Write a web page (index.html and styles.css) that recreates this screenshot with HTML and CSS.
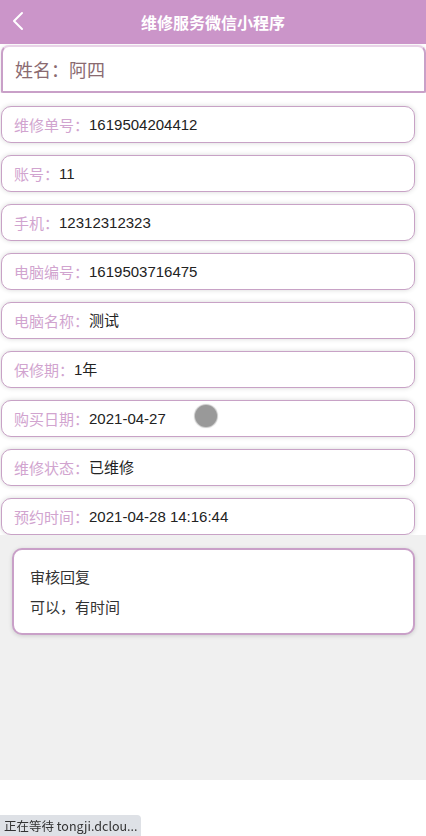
FILE: index.html
```html
<!DOCTYPE html>
<html lang="zh">
<head>
<meta charset="utf-8">
<title>维修服务微信小程序</title>
<link rel="stylesheet" href="styles.css">
</head>
<body>
<div class="page">
  <header class="nav">
    <svg class="back" width="14" height="20" viewBox="0 0 14 20"><polyline points="11,2 3,10 11,18" fill="none" stroke="#fff" stroke-width="2" stroke-linecap="round" stroke-linejoin="round"/></svg>
    <h1 class="title">维修服务微信小程序</h1>
  </header>
  <div class="name-card">姓名：阿四</div>
  <div class="rows">
    <div class="row"><span class="label">维修单号：</span><span class="value">1619504204412</span></div>
    <div class="row"><span class="label">账号：</span><span class="value">11</span></div>
    <div class="row"><span class="label">手机：</span><span class="value">12312312323</span></div>
    <div class="row"><span class="label">电脑编号：</span><span class="value">1619503716475</span></div>
    <div class="row"><span class="label">电脑名称：</span><span class="value">测试</span></div>
    <div class="row"><span class="label">保修期：</span><span class="value">1年</span></div>
    <div class="row"><span class="label">购买日期：</span><span class="value">2021-04-27</span></div>
    <div class="row"><span class="label">维修状态：</span><span class="value">已维修</span></div>
    <div class="row"><span class="label">预约时间：</span><span class="value">2021-04-28 14:16:44</span></div>
  </div>
  <div class="reply-area">
    <div class="reply-card">
      <p class="reply-line">审核回复</p>
      <p class="reply-line">可以，有时间</p>
    </div>
  </div>
</div>
<div class="touch-dot"></div>
<div class="status">正在等待 tongji.dclou...</div>
</body>
</html>
```
FILE: styles.css
```css
html, body {
  margin: 0;
  padding: 0;
  background: #fff;
}
body {
  font-family: "Liberation Sans", "Noto Sans CJK SC", sans-serif;
  width: 426px;
  overflow: hidden;
}
.page {
  display: flex;
  flex-direction: column;
}
.nav {
  height: 44px;
  background: #cb95c9;
  display: flex;
  align-items: center;
  justify-content: center;
  position: relative;
}
.back {
  position: absolute;
  left: 11px;
  top: 11px;
}
.title {
  margin: 0;
  color: #fff;
  font-size: 16px;
  font-weight: bold;
  font-family: "Noto Sans CJK SC", sans-serif;
  line-height: 44px;
}
.name-card {
  margin: 1px 0 0 1px;
  height: 44px;
  border: 2px solid #c9a0c8;
  border-top-color: #e9d3e8;
  border-radius: 8px 8px 2px 2px;
  background: #fff;
  box-shadow: 0 1px 4px rgba(0,0,0,0.12);
  padding-left: 12px;
  font-size: 18px;
  line-height: 44px;
  color: #8a6a70;
  font-family: "Noto Sans CJK SC", sans-serif;
}
.rows {
  background: #fff;
  padding-top: 13px;
  display: flex;
  flex-direction: column;
  gap: 12px;
}
.row {
  margin-left: 1px;
  width: 400px;
  height: 35px;
  border: 1px solid #c8a2c6;
  border-radius: 10px;
  background: #fff;
  box-shadow: 0 0 5px rgba(0,0,0,0.16);
  padding-left: 12px;
  display: flex;
  align-items: center;
  font-size: 15px;
  line-height: 35px;
}
.label {
  color: #d1a4cf;
  font-family: "Noto Sans CJK SC", sans-serif;
}
.value {
  color: #222;
}
.reply-area {
  background: #f0f0f0;
  height: 245px;
  padding-top: 13px;
  box-sizing: border-box;
}
.reply-card {
  margin-left: 12px;
  width: 403px;
  box-sizing: border-box;
  border: 2px solid #c9a0c8;
  border-radius: 10px;
  background: #fff;
  box-shadow: 0 1px 4px rgba(0,0,0,0.15);
  padding: 12px 16px 11px;
}
.reply-line {
  margin: 0;
  font-size: 15px;
  line-height: 30px;
  color: #333;
  font-family: "Noto Sans CJK SC", sans-serif;
}
.touch-dot {
  position: absolute;
  left: 195px;
  top: 405px;
  width: 22px;
  height: 22px;
  border-radius: 50%;
  background: #999;
  box-shadow: 0 0 1px 1px rgba(160,160,160,0.6);
}
.status {
  position: fixed;
  left: 0;
  bottom: 0;
  height: 21px;
  width: 141px;
  box-sizing: border-box;
  padding-left: 4px;
  background: #dee1e6;
  border-top-right-radius: 4px;
  font-family: "Noto Sans CJK SC", sans-serif;
  font-size: 12.5px;
  line-height: 21px;
  color: #333;
  white-space: nowrap;
  overflow: hidden;
}
```
